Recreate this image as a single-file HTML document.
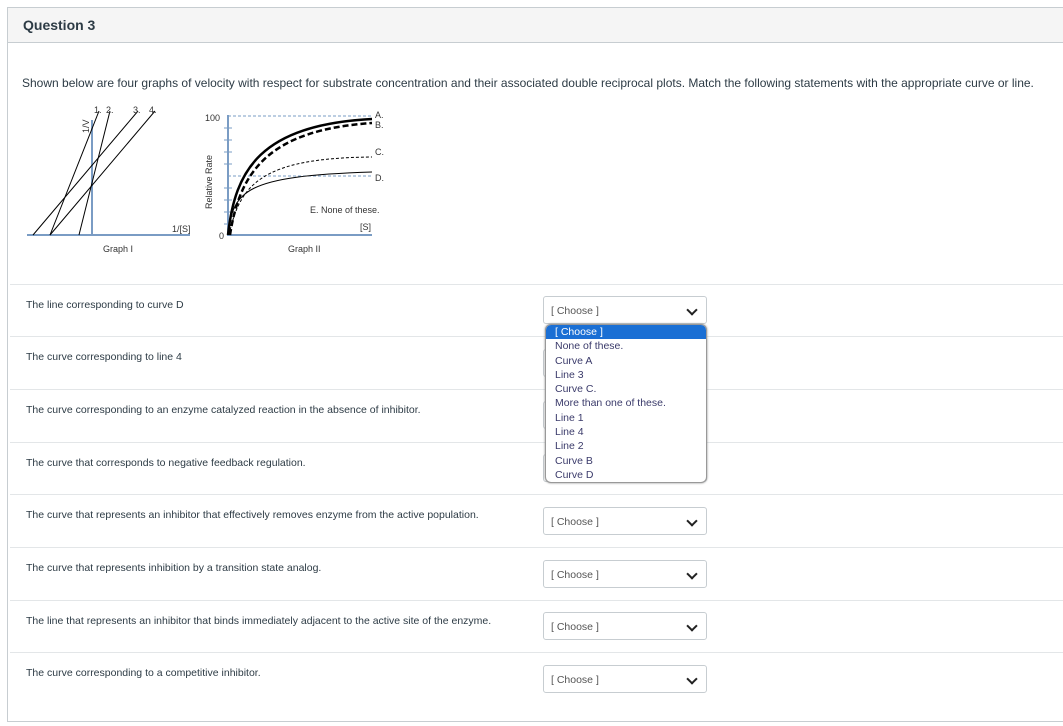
<!DOCTYPE html>
<html><head><style>
body{margin:0;background:#fff;font-family:"Liberation Sans",sans-serif;color:#2d3b45;width:1063px;height:726px;overflow:hidden;position:relative}
.box{position:absolute;left:7px;top:7px;width:1070px;height:713px;border:1px solid #c7cdd1}
.hd{height:34px;background:#f5f5f5;border-bottom:1px solid #c7cdd1;font-weight:bold;font-size:14px;line-height:34px;padding-left:15px;color:#2d3b45}
.intro{position:absolute;left:22px;top:76px;font-size:12px;color:#2d3b45;white-space:nowrap}
.row{position:absolute;left:10px;width:1060px;border-top:1px solid #e3e6e8;font-size:10.5px}
.row span{position:absolute;left:16px;top:14px}
.sel{position:absolute;left:543px;height:28px;border:1px solid #c7cdd1;border-radius:3px;font-size:10.5px;line-height:28px;padding-left:7px;box-sizing:border-box;width:164px;color:#555}
.sel:after{content:"";position:absolute;right:10px;top:9px;width:6px;height:6px;border-right:2px solid #222;border-bottom:2px solid #222;transform:rotate(45deg)}
.dd{position:absolute;left:545px;top:324px;width:160px;height:157px;border:1px solid #999;border-radius:6px;background:#fff;font-size:10.5px;overflow:hidden;box-shadow:0 0 2px #888}
.dd div{height:14.3px;line-height:14.3px;padding-left:9px;color:#3a3a6a}
.dd .on{background:#1a6fd4;color:#fff}
</style></head><body>
<div class="box"><div class="hd">Question 3</div></div>
<div class="intro">Shown below are four graphs of velocity with respect for substrate concentration and their associated double reciprocal plots. Match the following statements with the appropriate curve or line.</div>
<svg style="position:absolute;left:0;top:0" width="400" height="260" font-family="Liberation Sans" font-size="9" fill="#333">
<g stroke="#7a9cc4" stroke-width="2"><line x1="27" y1="235" x2="190" y2="235"/><line x1="92" y1="120" x2="92" y2="236"/></g>
<g stroke="#000" stroke-width="1"><line x1="50" y1="235" x2="99" y2="111"/><line x1="79" y1="235" x2="110" y2="111"/><line x1="33" y1="235" x2="138" y2="111"/><line x1="50" y1="235" x2="155" y2="111"/></g>
<text x="94" y="113">1.</text><text x="106" y="113">2.</text><text x="133" y="113">3.</text><text x="149" y="113">4.</text>
<text x="172" y="232">1/[S]</text><text x="103" y="252">Graph I</text>
<text transform="translate(89,133) rotate(-90)">1/V</text>
<g stroke="#7a9cc4" stroke-width="1" stroke-dasharray="3,2"><line x1="228" y1="116" x2="372" y2="116"/><line x1="228" y1="176" x2="372" y2="176"/></g>
<g stroke="#7a9cc4" stroke-width="2"><line x1="228" y1="235" x2="372" y2="235"/><line x1="228" y1="115" x2="228" y2="236"/></g>
<g stroke="#7a9cc4" stroke-width="1"><path d="M224 128h8M224 140h8M224 152h8M224 164h8M224 188h8M224 200h8M224 212h8M224 224h8"/></g>
<g fill="none" stroke="#000">
<path d="M228 235C235 170 260 125 372 119" stroke-width="2.5"/>
<path d="M230 235C240 170 270 130 372 123" stroke-width="2.5" stroke-dasharray="6,3"/>
<path d="M229 235C240 185 260 158 372 157" stroke-width="1" stroke-dasharray="3,2"/>
<path d="M228 235C233 190 245 176 372 172" stroke-width="1"/>
</g>
<text x="205" y="121">100</text><text x="219" y="239">0</text>
<text x="375" y="118">A.</text><text x="375" y="128">B.</text><text x="375" y="155">C.</text><text x="375" y="181">D.</text>
<text x="310" y="213">E. None of these.</text><text x="360" y="230">[S]</text><text x="288" y="252">Graph II</text>
<text transform="translate(212,209) rotate(-90)">Relative Rate</text>
</svg>
<div class="row" style="top:284px"><span>The line corresponding to curve D</span></div>
<div class="row" style="top:336px"><span>The curve corresponding to line 4</span></div>
<div class="row" style="top:389px"><span>The curve corresponding to an enzyme catalyzed reaction in the absence of inhibitor.</span></div>
<div class="row" style="top:442px"><span>The curve that corresponds to negative feedback regulation.</span></div>
<div class="row" style="top:494px"><span>The curve that represents an inhibitor that effectively removes enzyme from the active population.</span></div>
<div class="row" style="top:547px"><span>The curve that represents inhibition by a transition state analog.</span></div>
<div class="row" style="top:600px"><span>The line that represents an inhibitor that binds immediately adjacent to the active site of the enzyme.</span></div>
<div class="row" style="top:652px"><span>The curve corresponding to a competitive inhibitor.</span></div>
<div class="sel" style="top:296px">[ Choose ]</div>
<div class="sel" style="top:349px"></div>
<div class="sel" style="top:401px"></div>
<div class="sel" style="top:454px"></div>
<div class="sel" style="top:507px">[ Choose ]</div>
<div class="sel" style="top:560px">[ Choose ]</div>
<div class="sel" style="top:612px">[ Choose ]</div>
<div class="sel" style="top:665px">[ Choose ]</div>
<div class="dd"><div class="on">[ Choose ]</div><div>None of these.</div><div>Curve A</div><div>Line 3</div><div>Curve C.</div><div>More than one of these.</div><div>Line 1</div><div>Line 4</div><div>Line 2</div><div>Curve B</div><div>Curve D</div></div>
</body></html>
